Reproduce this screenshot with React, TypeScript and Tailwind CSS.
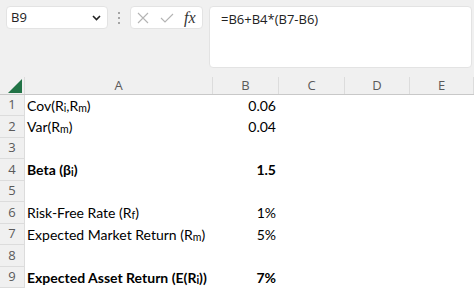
import React from "react";

type Row = {
  n: number;
  label?: React.ReactNode;
  value?: string;
  bold?: boolean;
};

const rows: Row[] = [
  { n: 1, label: <>Cov(R<sub>i</sub>,R<sub>m</sub>)</>, value: "0.06" },
  { n: 2, label: <>Var(R<sub>m</sub>)</>, value: "0.04" },
  { n: 3 },
  { n: 4, label: <>Beta (β<sub>i</sub>)</>, value: "1.5", bold: true },
  { n: 5 },
  { n: 6, label: <>Risk-Free Rate (R<sub>f</sub>)</>, value: "1%" },
  { n: 7, label: <>Expected Market Return (R<sub>m</sub>)</>, value: "5%" },
  { n: 8 },
  {
    n: 9,
    label: <>Expected Asset Return (E(R<sub>i</sub>))</>,
    value: "7%",
    bold: true,
  },
];

const columns = [
  { key: "A", w: "w-[188px]" },
  { key: "B", w: "w-[66px]" },
  { key: "C", w: "w-[66px]" },
  { key: "D", w: "w-[65px]" },
  { key: "E", w: "flex-1" },
];

const FormulaBar = () => (
  <div className="flex items-start h-[77px] pt-[6px] pl-[6px] pr-[2px] font-['Open_Sans',sans-serif]">
    <div className="flex items-center justify-between w-[102px] h-[23px] bg-white border border-[#e3e3e3] rounded-[4px] pl-[4px] pr-[6px] text-[13px] text-[#222]">
      <span>B9</span>
      <svg width="9" height="6" viewBox="0 0 9 6">
        <path d="M1 1 L4.5 4.5 L8 1" fill="none" stroke="#222" strokeWidth="1.6" />
      </svg>
    </div>

    <div className="flex flex-col items-center justify-center gap-[3px] w-[22px] h-[23px]">
      <span className="w-[2px] h-[2px] rounded-full bg-[#8c8c8c]" />
      <span className="w-[2px] h-[2px] rounded-full bg-[#8c8c8c]" />
      <span className="w-[2px] h-[2px] rounded-full bg-[#8c8c8c]" />
    </div>

    <div className="flex items-center w-[73px] h-[23px] bg-white border border-[#e3e3e3] rounded-[4px] pl-[6px]">
      <svg width="12" height="12" viewBox="0 0 12 12">
        <path d="M1 1 L11 11 M11 1 L1 11" stroke="#b4b4b4" strokeWidth="1.1" />
      </svg>
      <svg width="14" height="10" viewBox="0 0 14 10" className="ml-[11px]">
        <path d="M1 5 L5 9 L13 1" fill="none" stroke="#b4b4b4" strokeWidth="1.1" />
      </svg>
      <span className="ml-[10px] font-['Liberation_Serif',serif] italic text-[16px] leading-none text-[#333]">
        fx
      </span>
    </div>

    <div className="flex-1 ml-[6px] h-[62px] bg-white border border-[#e3e3e3] rounded-[4px] pl-[11px] pt-[3px] text-[13px] text-[#222]">
      =B6+B4*(B7-B6)
    </div>
  </div>
);

const HeaderRow = () => (
  <div className="flex h-[18px] border-b border-[#c8c8c8] font-['Open_Sans',sans-serif] text-[13px] text-[#5a5a5a]">
    <div className="relative w-[25px] border-r border-[#dcdcdc]">
      <svg width="14" height="14" viewBox="0 0 14 14" className="absolute right-[2px] bottom-[1px]">
        <path d="M14 0 L14 14 L0 14 Z" fill="#217346" />
      </svg>
    </div>
    {columns.map((c) => (
      <div
        key={c.key}
        className={`${c.w} flex items-center justify-center border-r border-[#dcdcdc] leading-none`}
      >
        {c.key}
      </div>
    ))}
  </div>
);

export default function App() {
  return (
    <div className="w-[474px] h-[288px] overflow-hidden bg-[#f0f0f0] flex flex-col">
      <FormulaBar />
      <HeaderRow />
      <div className="flex flex-col">
        {rows.map((r) => (
          <div key={r.n} className="flex h-[21.5px] shrink-0">
            <div className="w-[25px] flex items-center justify-center border-r border-b border-[#dcdcdc] bg-[#f0f0f0] font-['Open_Sans',sans-serif] text-[13px] text-[#5a5a5a]">
              {r.n}
            </div>
            <div
              className={`flex-1 flex bg-white font-['Lato',sans-serif] text-[14px] text-black ${
                r.bold ? "font-bold" : ""
              }`}
            >
              <div className="w-[188px] flex items-center pl-[2px] whitespace-nowrap">
                {r.label}
              </div>
              <div className="w-[66px] flex items-center justify-end pr-[3px]">
                {r.value}
              </div>
            </div>
          </div>
        ))}
      </div>
    </div>
  );
}
